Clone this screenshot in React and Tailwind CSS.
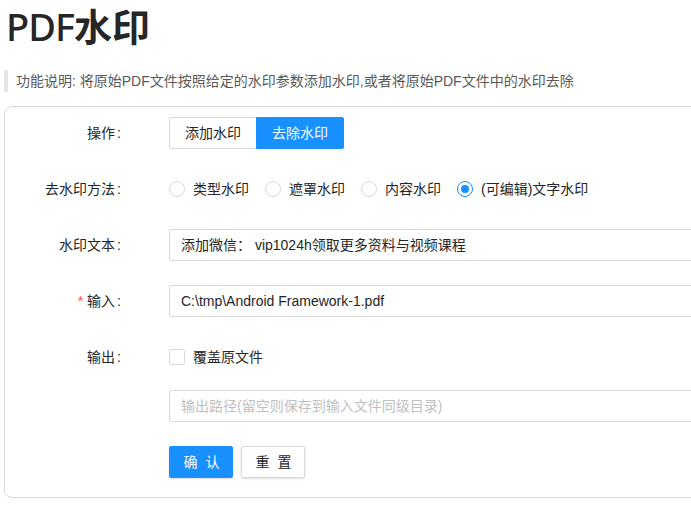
import React, { useState } from 'react';

const FONT = { fontFamily: '"Liberation Sans", "Noto Sans CJK SC", sans-serif' };

const methods = ['类型水印', '遮罩水印', '内容水印', '(可编辑)文字水印'];

function FormRow({ label, required, children, className = 'mb-6' }) {
  return (
    <div className={`flex items-center h-8 ${className}`}>
      <div className="w-[116px] shrink-0 text-right text-sm text-[#262626] whitespace-nowrap">
        {required && <span className="text-[#ff4d4f] mr-1">*</span>}
        {label}
        <span className="ml-[2px]">:</span>
      </div>
      <div className="ml-[48px] flex-1 flex items-center">{children}</div>
    </div>
  );
}

function Radio({ checked, label }) {
  return (
    <label className="flex items-center mr-2 cursor-pointer">
      <span
        className={`w-4 h-4 rounded-full border flex items-center justify-center bg-white ${
          checked ? 'border-[#1890ff]' : 'border-[#d9d9d9]'
        }`}
      >
        {checked && <span className="w-2 h-2 rounded-full bg-[#1890ff]" />}
      </span>
      <span className="px-2 text-sm text-[#262626]">{label}</span>
    </label>
  );
}

export default function App() {
  const [method] = useState(3);

  return (
    <div className="w-[691px] h-[513px] overflow-hidden bg-white" style={FONT}>
      <div className="pl-[6px] mt-[4px] h-[46px] flex items-center">
        <h1 className="text-[38px] leading-none font-semibold text-[#262626] whitespace-nowrap">
          <span className="font-['Noto_Sans'] font-medium tracking-[-1px]">PDF</span>水印
        </h1>
      </div>

      {/* 功能说明 */}
      <div className="mt-[20px] ml-[4px] border-l-4 border-[#e5e5e5] pl-2 h-[22px] leading-[22px] text-sm text-[#595959] whitespace-nowrap">
        功能说明: 将原始PDF文件按照给定的水印参数添加水印,或者将原始PDF文件中的水印去除
      </div>

      <div className="mt-[14px] ml-[4px] w-[760px] border border-[#d9d9d9] rounded-lg pt-[10px] pb-[19px]">
        <FormRow label="操作">
          <div className="flex">
            <button className="h-8 px-[15px] text-sm text-[#262626] border border-[#d9d9d9] rounded-l-[2px] bg-white">
              添加水印
            </button>
            <button className="-ml-px h-8 px-[15px] text-sm text-white bg-[#1890ff] border border-[#1890ff] rounded-r-[2px]">
              去除水印
            </button>
          </div>
        </FormRow>

        <FormRow label="去水印方法">
          <div className="flex items-center">
            {methods.map((m, i) => (
              <Radio key={m} label={m} checked={i === method} />
            ))}
          </div>
        </FormRow>

        <FormRow label="水印文本">
          <div className="w-full h-8 border border-[#d9d9d9] rounded-[2px] px-[11px] flex items-center text-sm text-[#262626] whitespace-nowrap">
            添加微信： vip1024h领取更多资料与视频课程
          </div>
        </FormRow>

        <FormRow label="输入" required>
          <div className="w-full h-8 border border-[#d9d9d9] rounded-[2px] px-[11px] flex items-center text-sm text-[#262626] whitespace-nowrap">
            C:\tmp\Android Framework-1.pdf
          </div>
        </FormRow>

        <FormRow label="输出" className="mb-[17px]">
          <label className="flex items-center">
            <span className="w-4 h-4 border border-[#d9d9d9] rounded-[2px] bg-white" />
            <span className="px-2 text-sm text-[#262626]">覆盖原文件</span>
          </label>
        </FormRow>

        <div className="flex items-center h-8 mb-6">
          <div className="w-[116px] shrink-0" />
          <div className="ml-[48px] flex-1 h-8 border border-[#d9d9d9] rounded-[2px] px-[11px] flex items-center text-sm text-[#bfbfbf] whitespace-nowrap">
            输出路径(留空则保存到输入文件同级目录)
          </div>
        </div>

        <div className="flex items-center h-8">
          <div className="w-[116px] shrink-0" />
          <div className="ml-[48px] flex gap-2">
            <button className="w-[64px] h-8 pl-[3px] text-sm text-white bg-[#1890ff] border border-[#1890ff] rounded-[2px] tracking-[0.15em] shadow-sm">
              确 认
            </button>
            <button className="w-[64px] h-8 pl-[3px] text-sm text-[#262626] bg-white border border-[#d9d9d9] rounded-[2px] tracking-[0.15em] shadow-sm">
              重 置
            </button>
          </div>
        </div>
      </div>
    </div>
  );
}
